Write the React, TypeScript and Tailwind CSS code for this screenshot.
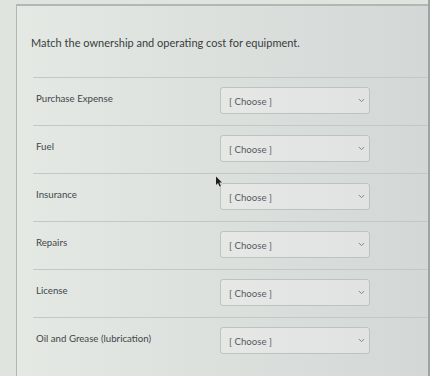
import { ChevronDown } from "lucide-react";

const rows = [
  "Purchase Expense",
  "Fuel",
  "Insurance",
  "Repairs",
  "License",
  "Oil and Grease (lubrication)",
];

function ChooseSelect() {
  return (
    <div className="mt-[9px] flex h-[27px] w-[150px] items-center justify-between rounded-[3px] border border-[#bec2c0] bg-white/25 pl-[8px] pr-[3px] text-[9.7px] text-[#575c5f]">
      <span className="pt-[2px]">[ Choose ]</span>
      <ChevronDown size={9} strokeWidth={2.4} className="text-[#6f7578]" />
    </div>
  );
}

export default function App() {
  return (
    <div className="relative h-[376px] w-[430px] overflow-hidden bg-[#dfe4de] pl-4 pt-[4px] font-['Lato','Noto_Sans',sans-serif]">
      <div className="h-full border-l border-t-2 border-[#b2b7b6] bg-linear-to-r from-[#e5e9e4] to-[#d3d7d6]">
        <p className="mt-[29px] pl-[14px] text-[11px] leading-[16px] text-[#383d40]">
          Match the ownership and operating cost for equipment.
        </p>
        <div className="ml-[16px] mt-[26px]">
          {rows.map((label) => (
            <div
              key={label}
              className="flex h-[48px] items-start border-t border-[#c3c7c5]"
            >
              <div className="w-[187px] pl-[3px] pt-[13px] text-[9.7px] leading-[14px] text-[#414649]">
                {label}
              </div>
              <ChooseSelect />
            </div>
          ))}
        </div>
      </div>
      <div className="absolute right-0 top-0 h-full w-[2px] bg-[#9ea3a3]" />
      <svg
        className="absolute left-[215px] top-[176px]"
        width="8"
        height="11"
        viewBox="0 0 8 11"
      >
        <path d="M1 0.5 L1 9 L3 7 L4.5 10.5 L5.8 10 L4.4 6.6 L7 6.6 Z" fill="#1d1f20" />
      </svg>
    </div>
  );
}
